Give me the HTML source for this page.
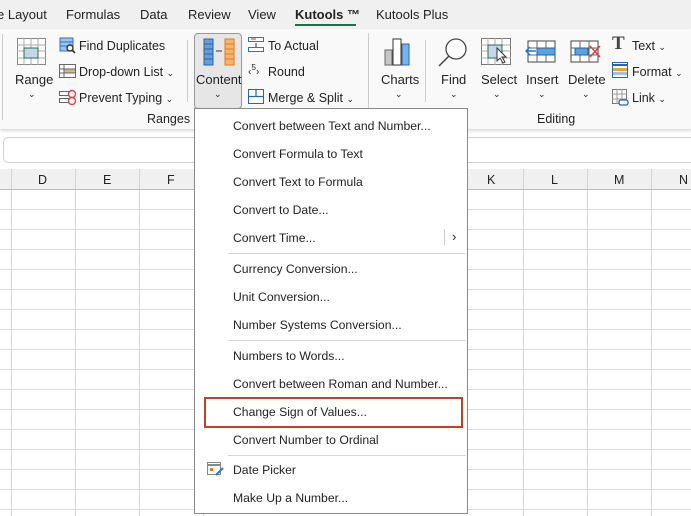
<!DOCTYPE html>
<html><head><meta charset="utf-8"><style>
*{margin:0;padding:0;box-sizing:border-box}
body{width:691px;height:516px;overflow:hidden;background:#fff;font-family:"Liberation Sans",sans-serif;font-size:12.5px;color:#222;position:relative}
.a{position:absolute;white-space:nowrap}
.tabs{position:absolute;left:0;top:0;width:691px;height:29px;background:#f0f0f0}
.rib{position:absolute;left:0;top:29px;width:691px;height:100px;background:#f9f9f9;box-shadow:0 2px 3px rgba(0,0,0,.15)}
.col{position:absolute;top:169px;width:1px;height:347px;background:#d4d4d4}
.row{position:absolute;left:0;width:691px;height:1px;background:#dcdcdc}
.menu{position:absolute;left:194px;top:108px;width:274px;height:406px;background:#fff;border:1px solid #888;font-size:12.2px}
.mi{position:absolute;left:38px}
.sep{position:absolute;left:33px;width:238px;height:1px;background:#d8d8d8}
.chev{font-size:9px}
</style></head><body>
<div class="tabs"></div>
<div class="a" style="left:-3px;top:7px;font-size:13px">e Layout</div>
<div class="a" style="left:66px;top:7px;font-size:13px">Formulas</div>
<div class="a" style="left:140px;top:7px;font-size:13px">Data</div>
<div class="a" style="left:188px;top:7px;font-size:13px">Review</div>
<div class="a" style="left:248px;top:7px;font-size:13px">View</div>
<div class="a" style="left:295px;top:7px;font-size:13px;font-weight:bold">Kutools ™</div>
<div class="a" style="left:295px;top:24px;width:61px;height:2px;background:#1e7145"></div>
<div class="a" style="left:376px;top:7px;font-size:13px">Kutools Plus</div>
<div class="rib"></div>
<div class="a" style="left:2px;top:34px;width:1px;height:86px;background:#ccc"></div>
<div class="a" style="left:187px;top:40px;width:1px;height:62px;background:#ccc"></div>
<div class="a" style="left:368px;top:33px;width:1px;height:90px;background:#ccc"></div>
<div class="a" style="left:425px;top:40px;width:1px;height:62px;background:#ccc"></div>
<svg class="a" style="left:17px;top:38px" width="30" height="28"><rect x="0.5" y="0.5" width="28" height="26" fill="#fff" stroke="#888"/><path d="M0 7h29M0 13h29M0 20h29M7 0v27M14 0v27M21 0v27" stroke="#aaa"/><rect x="7" y="10" width="14" height="10" fill="#c5d6ea" stroke="#1e7145"/></svg>
<div class="a" style="left:15px;top:72px;font-size:13px">Range</div>
<div class="a chev" style="left:28px;top:89px">⌄</div>
<svg class="a" style="left:59px;top:37px" width="17" height="17"><rect x="1" y="1" width="13" height="13" fill="#9cc3e8" stroke="#2b73c4"/><path d="M1 5h13M1 9h13" stroke="#2b73c4"/><circle cx="11" cy="11" r="3" fill="#fff" stroke="#333" stroke-width="1.4"/><path d="M13 13l3 3" stroke="#333" stroke-width="1.6"/></svg>
<div class="a" style="left:79px;top:39px">Find Duplicates</div>
<svg class="a" style="left:59px;top:64px" width="17" height="14"><rect x=".5" y=".5" width="16" height="13" fill="#fff" stroke="#666"/><rect x="5" y="5" width="11" height="4" fill="#d5b88a"/><path d="M5 0v14M0 5h17M0 9h17" stroke="#666"/></svg>
<div class="a" style="left:79px;top:65px">Drop-down List <span class="chev">⌄</span></div>
<svg class="a" style="left:59px;top:89px" width="18" height="16"><rect x=".5" y="2.5" width="9" height="4" fill="#fff" stroke="#666"/><rect x=".5" y="9.5" width="9" height="4" fill="#fff" stroke="#666"/><circle cx="13" cy="5" r="3.5" fill="#fff" stroke="#d9453b" stroke-width="1.4"/><circle cx="13" cy="12" r="3.5" fill="#fff" stroke="#d9453b" stroke-width="1.4"/></svg>
<div class="a" style="left:79px;top:91px">Prevent Typing <span class="chev">⌄</span></div>
<div class="a" style="left:147px;top:112px">Ranges &amp;</div>
<div class="a" style="left:194px;top:33px;width:48px;height:76px;background:#e6e6e6;border:1px solid #999;border-radius:4px"></div>
<svg class="a" style="left:203px;top:38px" width="32" height="28"><rect x="1" y="1" width="9" height="26" fill="#6a9cd6" stroke="#2b63ad"/><path d="M1 6h9M1 11h9M1 16h9M1 21h9" stroke="#2b63ad"/><rect x="22" y="1" width="9" height="26" fill="#f4b56e" stroke="#e07a1e"/><path d="M22 6h9M22 11h9M22 16h9M22 21h9" stroke="#e07a1e"/><path d="M13 13h6" stroke="#333"/></svg>
<div class="a" style="left:196px;top:72px;font-size:13px">Content</div>
<div class="a chev" style="left:214px;top:89px">⌄</div>
<svg class="a" style="left:248px;top:37px" width="17" height="16"><rect x=".5" y=".5" width="15" height="4" fill="#fff" stroke="#2b73c4"/><rect x=".5" y="10.5" width="15" height="4" fill="#fff" stroke="#2b73c4"/><path d="M3 2h5" stroke="#c33"/><path d="M8 6v4" stroke="#333"/></svg>
<div class="a" style="left:268px;top:39px">To Actual</div>
<div class="a" style="left:248px;top:62px;font-size:10px">‹<sup>5</sup>›</div>
<div class="a" style="left:268px;top:65px">Round</div>
<svg class="a" style="left:248px;top:89px" width="16" height="15"><rect x=".5" y=".5" width="15" height="14" fill="#fff" stroke="#2b63ad"/><path d="M0 7.5h16M8 0v7" stroke="#2b63ad" stroke-width="1.3"/></svg>
<div class="a" style="left:268px;top:91px">Merge &amp; Split <span class="chev">⌄</span></div>
<svg class="a" style="left:384px;top:38px" width="28" height="28"><rect x="1" y="12" width="7" height="15" fill="#c6c6c6" stroke="#666"/><rect x="9" y="1" width="8" height="26" fill="#fff" stroke="#333"/><rect x="18" y="6" width="7" height="21" fill="#7ab4e6" stroke="#2b63ad"/></svg>
<div class="a" style="left:381px;top:72px;font-size:13px">Charts</div>
<div class="a chev" style="left:395px;top:89px">⌄</div>
<svg class="a" style="left:437px;top:37px" width="32" height="32"><circle cx="19" cy="12" r="10" fill="#fff" stroke="#444" stroke-width="1.3"/><path d="M12 19L2 29" stroke="#444" stroke-width="1.5"/></svg>
<div class="a" style="left:441px;top:72px;font-size:13px">Find</div>
<div class="a chev" style="left:450px;top:89px">⌄</div>
<svg class="a" style="left:481px;top:38px" width="31" height="28"><rect x=".5" y=".5" width="29" height="26" fill="#fff" stroke="#777"/><path d="M0 7h30M0 13h30M0 20h30M7 0v27M14 0v27M21 0v27" stroke="#aaa"/><rect x="7" y="7" width="14" height="13" fill="#c5d6ea" stroke="#1e7145"/><path d="M16 10v13l3-3 3 5 2-1-3-5h4z" fill="#fff" stroke="#333"/></svg>
<div class="a" style="left:481px;top:72px;font-size:13px">Select</div>
<div class="a chev" style="left:493px;top:89px">⌄</div>
<svg class="a" style="left:525px;top:40px" width="32" height="24"><rect x="3" y="1" width="27" height="21" fill="#fff" stroke="#444"/><path d="M3 8h27M3 15h27M12 1v21M21 1v21" stroke="#666"/><rect x="12" y="8" width="18" height="7" fill="#5da1e0" stroke="#1f5fa8"/><path d="M11 11H1M5 7l-4 4 4 4" stroke="#1f7ad0" stroke-width="1.5" fill="none"/></svg>
<div class="a" style="left:526px;top:72px;font-size:13px">Insert</div>
<div class="a chev" style="left:538px;top:89px">⌄</div>
<svg class="a" style="left:570px;top:40px" width="32" height="24"><rect x="1" y="1" width="27" height="21" fill="#fff" stroke="#444"/><path d="M1 8h27M1 15h27M10 1v21M19 1v21" stroke="#666"/><rect x="5" y="8" width="13" height="7" fill="#5da1e0" stroke="#1f5fa8"/><path d="M20 6l10 11M30 6L20 17" stroke="#e04040" stroke-width="1.5"/></svg>
<div class="a" style="left:568px;top:72px;font-size:13px">Delete</div>
<div class="a chev" style="left:582px;top:89px">⌄</div>
<div class="a" style="left:612px;top:33px;font-family:'Liberation Serif',serif;font-size:19px;font-weight:bold;color:#444">T</div>
<div class="a" style="left:632px;top:39px">Text <span class="chev">⌄</span></div>
<svg class="a" style="left:612px;top:62px" width="17" height="17"><rect x=".5" y=".5" width="15" height="15" fill="#fff" stroke="#2b63ad"/><rect x="1" y="6" width="14" height="3" fill="#e8a04c"/><rect x="1" y="10" width="14" height="3" fill="#9cc3e8"/><path d="M0 3h16" stroke="#2b63ad" stroke-width="2"/></svg>
<div class="a" style="left:632px;top:65px">Format <span class="chev">⌄</span></div>
<svg class="a" style="left:612px;top:89px" width="17" height="17"><rect x=".5" y=".5" width="14" height="14" fill="#fff" stroke="#777"/><path d="M0 5h15M0 10h15M5 0v15M10 0v15" stroke="#999"/><rect x="7" y="11" width="9" height="5" rx="2" fill="#fff" stroke="#2b63ad" stroke-width="1.3"/></svg>
<div class="a" style="left:632px;top:91px">Link <span class="chev">⌄</span></div>
<div class="a" style="left:537px;top:112px">Editing</div>
<div class="a" style="left:3px;top:137px;width:700px;height:26px;border:1px solid #d0d0d0;border-radius:5px;background:#fff"></div>
<div class="a" style="left:0;top:169px;width:691px;height:20px;background:#f0f0f0"></div>
<div class="a" style="left:38px;top:173px">D</div>
<div class="a" style="left:103px;top:173px">E</div>
<div class="a" style="left:167px;top:173px">F</div>
<div class="a" style="left:487px;top:173px">K</div>
<div class="a" style="left:551px;top:173px">L</div>
<div class="a" style="left:614px;top:173px">M</div>
<div class="a" style="left:679px;top:173px">N</div>
<div class="col" style="left:11px"></div><div class="col" style="left:75px"></div><div class="col" style="left:139px"></div><div class="col" style="left:203px"></div><div class="col" style="left:523px"></div><div class="col" style="left:587px"></div><div class="col" style="left:651px"></div>
<div class="row" style="top:189px;background:#bbb"></div>
<div class="row" style="top:209px"></div><div class="row" style="top:229px"></div><div class="row" style="top:249px"></div><div class="row" style="top:269px"></div><div class="row" style="top:289px"></div><div class="row" style="top:309px"></div><div class="row" style="top:329px"></div><div class="row" style="top:349px"></div><div class="row" style="top:369px"></div><div class="row" style="top:389px"></div><div class="row" style="top:409px"></div><div class="row" style="top:429px"></div><div class="row" style="top:449px"></div><div class="row" style="top:469px"></div><div class="row" style="top:489px"></div><div class="row" style="top:509px"></div>
<div class="menu">
<div class="mi" style="top:10px">Convert between Text and Number...</div>
<div class="mi" style="top:38px">Convert Formula to Text</div>
<div class="mi" style="top:66px">Convert Text to Formula</div>
<div class="mi" style="top:94px">Convert to Date...</div>
<div class="mi" style="top:122px">Convert Time...</div>
<div class="a" style="left:249px;top:120px;width:1px;height:16px;background:#ccc"></div>
<div class="a" style="left:257px;top:120px;font-size:13px">›</div>
<div class="sep" style="top:144px"></div>
<div class="mi" style="top:153px">Currency Conversion...</div>
<div class="mi" style="top:181px">Unit Conversion...</div>
<div class="mi" style="top:209px">Number Systems Conversion...</div>
<div class="sep" style="top:231px"></div>
<div class="mi" style="top:240px">Numbers to Words...</div>
<div class="mi" style="top:268px">Convert between Roman and Number...</div>
<div class="a" style="left:9px;top:288px;width:259px;height:31px;border:2px solid #c0402a"></div>
<div class="mi" style="top:296px">Change Sign of Values...</div>
<div class="mi" style="top:324px">Convert Number to Ordinal</div>
<div class="sep" style="top:346px"></div>
<svg class="a" style="left:12px;top:352px" width="18" height="16"><rect x=".5" y="1.5" width="13" height="12" fill="#fff" stroke="#888"/><path d="M0 4h14" stroke="#888" stroke-width="2"/><rect x="3" y="7" width="3" height="3" fill="#e07a1e"/><path d="M9 14l7-7" stroke="#2b73c4" stroke-width="2"/></svg>
<div class="mi" style="top:354px">Date Picker</div>
<div class="mi" style="top:382px">Make Up a Number...</div>
</div>
</body></html>
